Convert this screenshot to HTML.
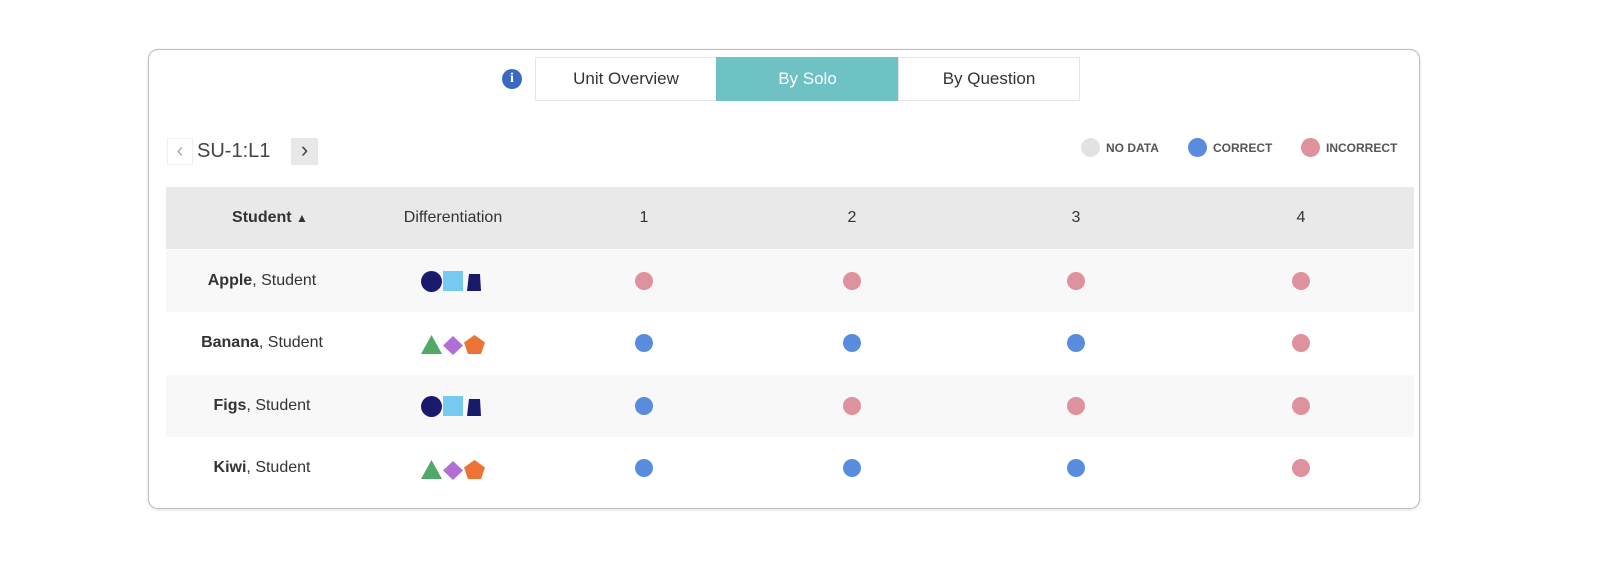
<!DOCTYPE html>
<html><head><meta charset="utf-8"><style>
*{margin:0;padding:0;box-sizing:border-box}
body{width:1600px;height:569px;background:#fff;font-family:"Liberation Sans",Arial,sans-serif;position:relative;overflow:hidden;color:#333}
.card{position:absolute;left:148px;top:49px;width:1272px;height:460px;border:1px solid #bdbdbd;border-radius:10px;box-shadow:0 1px 3px rgba(0,0,0,.12)}
.a{position:absolute}
.tab{position:absolute;top:57px;height:44px;border:1px solid #e6e6e6;font-size:17px;color:#333;text-align:center;line-height:42px}
.row{position:absolute;left:166px;width:1248px;height:62px}
.c{position:absolute;transform:translateX(-50%);white-space:nowrap}
.dot{position:absolute;width:18px;height:18px;border-radius:50%;margin-left:-9px;margin-top:-9px}
.p{background:#df919d}.b{background:#5a8cdd}
.lg{position:absolute;top:138px;height:20px;font-size:12px;font-weight:bold;color:#555;line-height:20px}
.lg i{display:inline-block;width:19px;height:19px;border-radius:50%;vertical-align:middle;margin-right:6px;margin-top:-3px}
</style></head><body>
<div class="card"></div>
<div class="a" style="left:502px;top:69px;width:20px;height:20px;border-radius:50%;background:#3b69c2;color:#fff;font-family:'Liberation Serif',serif;font-weight:bold;font-size:14px;text-align:center;line-height:20px">i</div>
<div class="tab" style="left:535px;width:182px">Unit Overview</div>
<div class="tab" style="left:716px;width:183px;background:#6fc2c4;border-color:#6fc2c4;color:#fff">By Solo</div>
<div class="tab" style="left:898px;width:182px">By Question</div>

<div class="a" style="left:167px;top:138px;width:26px;height:27px;border:1px solid #f0f0f0;color:#aaa;font-size:20px;text-align:center;line-height:24px">&#8249;</div>
<div class="a" style="left:197px;top:140px;font-size:20px;color:#444">SU-1:L1</div>
<div class="a" style="left:291px;top:138px;width:27px;height:27px;background:#e8e8e8;color:#444;font-size:22px;text-align:center;line-height:24px">&#8250;</div>

<div class="lg" style="left:1081px"><i style="background:#e2e2e2"></i>NO DATA</div>
<div class="lg" style="left:1188px"><i style="background:#5a8cdd"></i>CORRECT</div>
<div class="lg" style="left:1301px"><i style="background:#df919d"></i>INCORRECT</div>

<div class="row" style="top:187px;background:#e9e9e9;font-size:16px"></div>
<div class="c" style="left:270px;top:209px;font-weight:bold;font-size:16px">Student <span style="font-size:12px">&#9650;</span></div>
<div class="c" style="left:453px;top:209px;font-size:16px">Differentiation</div>
<div class="c" style="left:644px;top:209px;font-size:16px">1</div>
<div class="c" style="left:852px;top:209px;font-size:16px">2</div>
<div class="c" style="left:1076px;top:209px;font-size:16px">3</div>
<div class="c" style="left:1301px;top:209px;font-size:16px">4</div>

<div class="row" style="top:250px;background:#f8f8f8"></div>
<div class="row" style="top:312px;background:#fff"></div>
<div class="row" style="top:375px;background:#f8f8f8"></div>
<div class="row" style="top:437px;background:#fff"></div>

<div class="c" style="left:262px;top:272px;font-size:16px"><b>Apple</b>, Student</div>
<div class="c" style="left:262px;top:334px;font-size:16px"><b>Banana</b>, Student</div>
<div class="c" style="left:262px;top:397px;font-size:16px"><b>Figs</b>, Student</div>
<div class="c" style="left:262px;top:459px;font-size:16px"><b>Kiwi</b>, Student</div>

<svg class="a" style="left:420px;top:270px" width="64" height="24"><circle cx="11.5" cy="11.5" r="10.5" fill="#191a6c"/><rect x="23" y="1" width="20" height="20" fill="#77caef"/><path d="M47 21 L49 4 L60 4 L61 21 Z" fill="#191a6c"/></svg>
<svg class="a" style="left:420px;top:332px" width="66" height="24"><path d="M1 22 L11.5 3 L22 22 Z" fill="#4faa68"/><path d="M33 4 L43 13.5 L33 23 L23 13.5 Z" fill="#b06ed6"/><path d="M54.5 3 L65 10.5 L61 22 L48 22 L44 10.5 Z" fill="#ec7236"/></svg>
<svg class="a" style="left:420px;top:395px" width="64" height="24"><circle cx="11.5" cy="11.5" r="10.5" fill="#191a6c"/><rect x="23" y="1" width="20" height="20" fill="#77caef"/><path d="M47 21 L49 4 L60 4 L61 21 Z" fill="#191a6c"/></svg>
<svg class="a" style="left:420px;top:457px" width="66" height="24"><path d="M1 22 L11.5 3 L22 22 Z" fill="#4faa68"/><path d="M33 4 L43 13.5 L33 23 L23 13.5 Z" fill="#b06ed6"/><path d="M54.5 3 L65 10.5 L61 22 L48 22 L44 10.5 Z" fill="#ec7236"/></svg>

<div class="dot p" style="left:644px;top:281px"></div><div class="dot p" style="left:852px;top:281px"></div><div class="dot p" style="left:1076px;top:281px"></div><div class="dot p" style="left:1301px;top:281px"></div>
<div class="dot b" style="left:644px;top:343px"></div><div class="dot b" style="left:852px;top:343px"></div><div class="dot b" style="left:1076px;top:343px"></div><div class="dot p" style="left:1301px;top:343px"></div>
<div class="dot b" style="left:644px;top:406px"></div><div class="dot p" style="left:852px;top:406px"></div><div class="dot p" style="left:1076px;top:406px"></div><div class="dot p" style="left:1301px;top:406px"></div>
<div class="dot b" style="left:644px;top:468px"></div><div class="dot b" style="left:852px;top:468px"></div><div class="dot b" style="left:1076px;top:468px"></div><div class="dot p" style="left:1301px;top:468px"></div>
</body></html>
